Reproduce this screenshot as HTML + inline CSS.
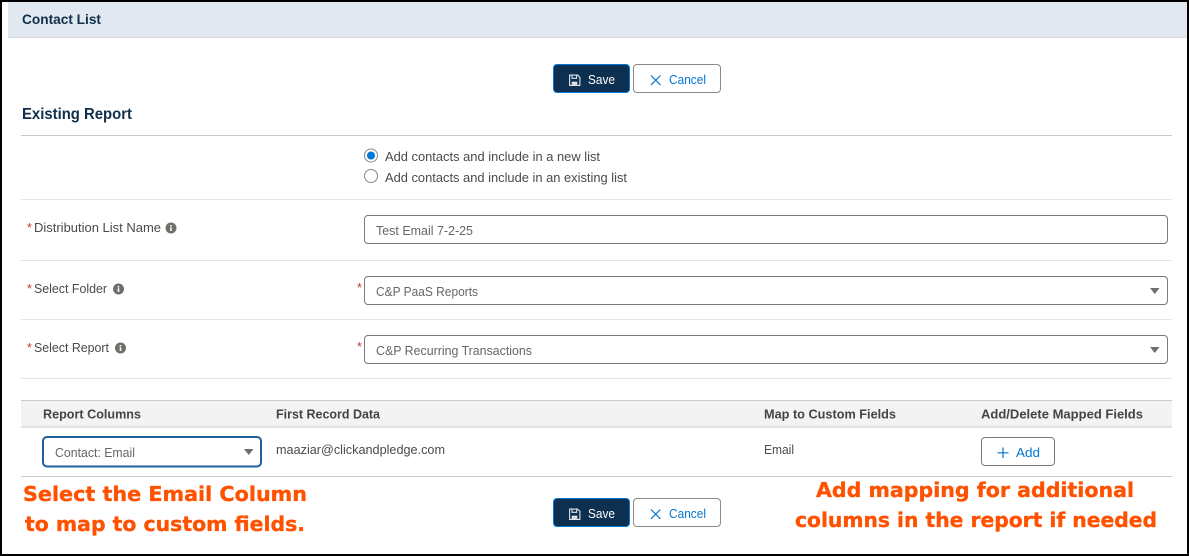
<!DOCTYPE html>
<html>
<head>
<meta charset="utf-8">
<style>
html,body{margin:0;padding:0;background:#fff;width:1189px;height:556px;overflow:hidden}
svg{display:block}
text{font-family:"Liberation Sans",sans-serif;font-size:13px;fill:#4a4a4a;white-space:pre}
.b{font-weight:bold}
.navy{fill:#0f2f4b}
.h{font-weight:bold;fill:#444;font-size:13px}
.red{fill:#c23934;font-size:12.5px}
.o{font-family:"DejaVu Sans",sans-serif;font-weight:bold;font-size:20px;fill:#ff5200;stroke:#ff5200;stroke-width:.35px}
.blue{fill:#0176d3}
</style>
</head>
<body>
<svg width="1189" height="556" viewBox="0 0 1189 556" xmlns="http://www.w3.org/2000/svg">
<rect x="0" y="0" width="1189" height="556" fill="#000"/>
<rect x="2" y="2" width="1185" height="552" fill="#fff"/>

<rect x="8" y="2" width="1179" height="35" fill="#e1e8ef"/>
<rect x="8" y="37" width="1179" height="1" fill="#d4d7da"/>
<text x="22" y="24" class="b navy" textLength="79" lengthAdjust="spacingAndGlyphs" style="font-size:13.5px">Contact List</text>

<!-- top buttons -->
<rect x="553.5" y="64.5" width="76" height="28" rx="3.5" fill="#0d3050" stroke="#0176d3"/>
<g fill="none" stroke="#dfe5ea" stroke-width="1.1"><path d="M569.6 75.1h8l2.3 2.2v8.1h-10.3z"/><path d="M572 75.3v3h4.6v-3"/></g>
<rect x="571.7" y="81.7" width="5.6" height="3.2" fill="#dfe5ea"/>
<text x="588" y="84" style="fill:#fff" textLength="27" lengthAdjust="spacingAndGlyphs">Save</text>
<rect x="633.5" y="64.5" width="87" height="28" rx="3.5" fill="#fff" stroke="#8a8a8a"/>
<path d="M651 75.5l9.4 9.4M660.4 75.5l-9.4 9.4" stroke="#0176d3" stroke-width="1.2" fill="none"/>
<text x="669" y="84" class="blue" textLength="37" lengthAdjust="spacingAndGlyphs">Cancel</text>

<text x="22" y="119" class="b navy" textLength="110" lengthAdjust="spacingAndGlyphs" style="font-size:15.5px">Existing Report</text>
<rect x="21" y="135" width="1151" height="1" fill="#c9c9c9"/>

<!-- radios -->
<circle cx="371" cy="155.5" r="6.5" fill="#fff" stroke="#8a8a8a"/>
<circle cx="371" cy="155.5" r="4" fill="#0176d3"/>
<text x="385" y="161" textLength="215" lengthAdjust="spacingAndGlyphs">Add contacts and include in a new list</text>
<circle cx="371" cy="176" r="6.5" fill="#fff" stroke="#8a8a8a"/>
<text x="385" y="182" textLength="242" lengthAdjust="spacingAndGlyphs">Add contacts and include in an existing list</text>
<rect x="21" y="199" width="1151" height="1" fill="#e5e5e5"/>

<!-- Distribution -->
<text x="27" y="232" class="red">*</text>
<text x="34" y="232" textLength="127" lengthAdjust="spacingAndGlyphs">Distribution List Name</text>
<circle cx="171" cy="228" r="5.5" fill="#706e6b"/>
<rect x="170.2" y="227.3" width="1.6" height="3.6" fill="#fff"/><rect x="170.2" y="225" width="1.6" height="1.5" fill="#fff"/>
<rect x="364.5" y="215.5" width="803" height="28" rx="3.5" fill="#fff" stroke="#7a7a7a"/>
<text x="376" y="235" textLength="97" lengthAdjust="spacingAndGlyphs" style="fill:#666">Test Email 7-2-25</text>
<rect x="21" y="260" width="1151" height="1" fill="#e5e5e5"/>

<!-- Folder -->
<text x="27" y="293" class="red">*</text>
<text x="34" y="293" textLength="73" lengthAdjust="spacingAndGlyphs">Select Folder</text>
<circle cx="118.5" cy="289" r="5.5" fill="#706e6b"/>
<rect x="117.7" y="288.3" width="1.6" height="3.6" fill="#fff"/><rect x="117.7" y="286" width="1.6" height="1.5" fill="#fff"/>
<text x="357" y="292" class="red">*</text>
<rect x="364.5" y="276.5" width="803" height="28" rx="3.5" fill="#fff" stroke="#7a7a7a"/>
<text x="376" y="296" textLength="102" lengthAdjust="spacingAndGlyphs" style="fill:#666">C&amp;P PaaS Reports</text>
<path d="M1150 288h9.5l-4.75 6z" fill="#706e6b"/>
<rect x="21" y="319" width="1151" height="1" fill="#e5e5e5"/>

<!-- Report -->
<text x="27" y="352" class="red">*</text>
<text x="34" y="352" textLength="75" lengthAdjust="spacingAndGlyphs">Select Report</text>
<circle cx="120.5" cy="348" r="5.5" fill="#706e6b"/>
<rect x="119.7" y="347.3" width="1.6" height="3.6" fill="#fff"/><rect x="119.7" y="345" width="1.6" height="1.5" fill="#fff"/>
<text x="357" y="351" class="red">*</text>
<rect x="364.5" y="335.5" width="803" height="28" rx="3.5" fill="#fff" stroke="#7a7a7a"/>
<text x="376" y="355" textLength="156" lengthAdjust="spacingAndGlyphs" style="fill:#666">C&amp;P Recurring Transactions</text>
<path d="M1150 347h9.5l-4.75 6z" fill="#706e6b"/>
<rect x="21" y="378" width="1151" height="1" fill="#e5e5e5"/>

<!-- table -->
<rect x="21" y="400" width="1151" height="27" fill="#f3f3f3"/>
<rect x="21" y="400" width="1151" height="1" fill="#c9c9c9"/>
<rect x="21" y="426.5" width="1151" height="1" fill="#c9c9c9"/>
<text x="43" y="418.5" class="h" textLength="98" lengthAdjust="spacingAndGlyphs">Report Columns</text>
<text x="276" y="418.5" class="h" textLength="104" lengthAdjust="spacingAndGlyphs">First Record Data</text>
<text x="764" y="418.5" class="h" textLength="132" lengthAdjust="spacingAndGlyphs">Map to Custom Fields</text>
<text x="981" y="418.5" class="h" textLength="162" lengthAdjust="spacingAndGlyphs">Add/Delete Mapped Fields</text>

<rect x="43" y="437" width="218" height="29.5" rx="4" fill="#fff" stroke="#1f5f9c" stroke-width="2"/>
<text x="55" y="457" textLength="80" lengthAdjust="spacingAndGlyphs" style="fill:#666">Contact: Email</text>
<path d="M244 449h9.5l-4.75 6z" fill="#706e6b"/>
<text x="276" y="454" textLength="169" lengthAdjust="spacingAndGlyphs">maaziar@clickandpledge.com</text>
<text x="764" y="454" textLength="30" lengthAdjust="spacingAndGlyphs">Email</text>
<rect x="981.5" y="437.5" width="73" height="28" rx="3.5" fill="#fff" stroke="#7a7a7a"/>
<path d="M1003 447.5v10.5M997.5 452.8h11" stroke="#0176d3" stroke-width="1.2" fill="none"/>
<text x="1016" y="457" class="blue" textLength="24" lengthAdjust="spacingAndGlyphs">Add</text>
<rect x="21" y="476" width="1151" height="1" fill="#c9c9c9"/>

<!-- bottom buttons -->
<rect x="553.5" y="498.5" width="76" height="28" rx="3.5" fill="#0d3050" stroke="#0176d3"/>
<g fill="none" stroke="#dfe5ea" stroke-width="1.1"><path d="M569.6 509.1h8l2.3 2.2v8.1h-10.3z"/><path d="M572 509.3v3h4.6v-3"/></g>
<rect x="571.7" y="515.7" width="5.6" height="3.2" fill="#dfe5ea"/>
<text x="588" y="518" style="fill:#fff" textLength="27" lengthAdjust="spacingAndGlyphs">Save</text>
<rect x="633.5" y="498.5" width="87" height="28" rx="3.5" fill="#fff" stroke="#8a8a8a"/>
<path d="M651 509.5l9.4 9.4M660.4 509.5l-9.4 9.4" stroke="#0176d3" stroke-width="1.2" fill="none"/>
<text x="669" y="518" class="blue" textLength="37" lengthAdjust="spacingAndGlyphs">Cancel</text>

<!-- annotations -->
<text x="23" y="501" class="o" textLength="284" lengthAdjust="spacingAndGlyphs">Select the Email Column</text>
<text x="25" y="531" class="o" textLength="280" lengthAdjust="spacingAndGlyphs">to map to custom fields.</text>
<text x="816" y="497" class="o" textLength="318" lengthAdjust="spacingAndGlyphs">Add mapping for additional</text>
<text x="795" y="527" class="o" textLength="362" lengthAdjust="spacingAndGlyphs">columns in the report if needed</text>
</svg>
</body>
</html>
